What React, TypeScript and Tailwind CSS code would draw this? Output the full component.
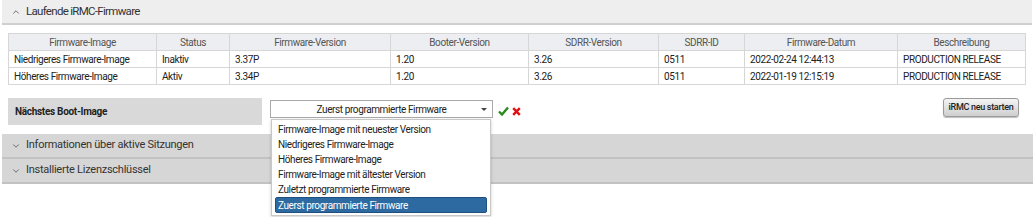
import { ChevronUp, ChevronDown } from "lucide-react";

const rows = [
  ["Niedrigeres Firmware-Image", "Inaktiv", "3.37P", "1.20", "3.26", "0511", "2022-02-24 12:44:13", "PRODUCTION RELEASE"],
  ["Höheres Firmware-Image", "Aktiv", "3.34P", "1.20", "3.26", "0511", "2022-01-19 12:15:19", "PRODUCTION RELEASE"],
];

const heads = [
  ["Firmware-Image", "w-[148px]"],
  ["Status", "w-[73px]"],
  ["Firmware-Version", "w-[161px]"],
  ["Booter-Version", "w-[138px]"],
  ["SDRR-Version", "w-[130px]"],
  ["SDRR-ID", "w-[86px]"],
  ["Firmware-Datum", "w-[153px]"],
  ["Beschreibung", ""],
];

const options = [
  "Firmware-Image mit neuester Version",
  "Niedrigeres Firmware-Image",
  "Höheres Firmware-Image",
  "Firmware-Image mit ältester Version",
  "Zuletzt programmierte Firmware",
  "Zuerst programmierte Firmware",
];

export default function App() {
  return (
    <div className="w-[1035px] h-[217px] bg-white text-[10px] tracking-[-0.4px] text-[#222] font-['Roboto','Liberation_Sans',sans-serif] overflow-hidden">
      {/* Laufende Firmware */}
      <div className="ml-[2px] mr-[3px] h-[25px] bg-[#eeeeee] border-b-2 border-[#cfcfcf] flex items-center pl-[9px] gap-[5px]">
        <ChevronUp size={10} strokeWidth={2} className="text-[#555]" />
        <span className="text-[11.5px] tracking-[-0.7px] text-[#333]">Laufende iRMC-Firmware</span>
      </div>

      <div className="px-[8px] pt-[8px]">
        <table className="w-[1018px] border-collapse table-fixed">
          <thead>
            <tr className="bg-[#eceef1] h-[17px]">
              {heads.map(([h, w]) => (
                <th key={h} className={`${w} border border-[#d6d6d6] font-normal text-[#555] text-center leading-[15px]`}>
                  {h}
                </th>
              ))}
            </tr>
          </thead>
          <tbody>
            {rows.map((r) => (
              <tr key={r[0]} className="h-[17px]">
                {r.map((c, i) => (
                  <td key={i} className="border border-[#d6d6d6] px-[5px] leading-[15px] whitespace-nowrap">
                    {c}
                  </td>
                ))}
              </tr>
            ))}
          </tbody>
        </table>
      </div>

      {/* Boot image row */}
      <div className="flex items-start pl-[8px] pt-[13px] h-[49px]">
        <div className="w-[254px] h-[27px] bg-[#d9d9d9] pl-[7px] pt-[6px] font-bold text-[10px] tracking-[-0.3px] text-[#222]">
          Nächstes Boot-Image
        </div>
        <div className="relative ml-[8px] mt-[2px]">
          <div className="w-[223px] h-[18px] border border-[#aaa] bg-white flex items-center relative">
            <span className="flex-1 text-center">Zuerst programmierte Firmware</span>
            <span className="absolute right-[5px] top-[7px] w-0 h-0 border-l-[3px] border-r-[3px] border-t-[3px] border-l-transparent border-r-transparent border-t-[#444]" />
          </div>
          <div className="absolute left-[1px] top-[19px] w-[220px] bg-white border border-[#c8c8c8] shadow-[0_1px_3px_rgba(0,0,0,0.2)] px-[3px] py-[2px] z-10">
            {options.map((o, i) => (
              <div
                key={o}
                className={
                  i === options.length - 1
                    ? "h-[16px] leading-[15px] px-[2px] bg-[#2e6aa2] text-white rounded-[2px] border border-[#1f4f7e]"
                    : "h-[15px] leading-[15px] px-[3px] text-[#222]"
                }
              >
                {o}
              </div>
            ))}
          </div>
        </div>
        <div className="flex items-center gap-[3px] ml-[5px] mt-[8px]">
          <svg width="11" height="10" viewBox="0 0 11 10">
            <path d="M1 5.5 L4 8.5 L10 1.5" stroke="#2a8a1e" strokeWidth="2.4" fill="none" />
          </svg>
          <svg width="9" height="9" viewBox="0 0 9 9">
            <path d="M1.2 1.2 L7.8 7.8 M7.8 1.2 L1.2 7.8" stroke="#e01010" strokeWidth="2.4" fill="none" />
          </svg>
        </div>
        <div className="flex-1" />
        <button
          type="button"
          className="mr-[16px] w-[76px] h-[19px] rounded-[3px] border border-[#9a9a9a] bg-gradient-to-b from-[#f4f4f4] to-[#cfcfcf] shadow-[0_1px_1px_rgba(0,0,0,0.25)] text-[9px] font-medium tracking-[-0.3px] text-[#222]"
        >
          iRMC neu starten
        </button>
      </div>

      {/* Collapsed sections */}
      <div className="ml-[2px] mr-[2px]">
        <div className="h-[25px] bg-[#d6d6d6] border-b-2 border-[#c2c2c2] flex items-center pl-[9px] gap-[5px]">
          <ChevronDown size={10} strokeWidth={2} className="text-[#555]" />
          <span className="text-[11px] tracking-[-0.25px] text-[#333]">Informationen über aktive Sitzungen</span>
        </div>
        <div className="h-[25px] bg-[#d6d6d6] border-b-2 border-[#c2c2c2] flex items-center pl-[9px] gap-[5px]">
          <ChevronDown size={10} strokeWidth={2} className="text-[#555]" />
          <span className="text-[11px] tracking-[-0.25px] text-[#333]">Installierte Lizenzschlüssel</span>
        </div>
      </div>
    </div>
  );
}
